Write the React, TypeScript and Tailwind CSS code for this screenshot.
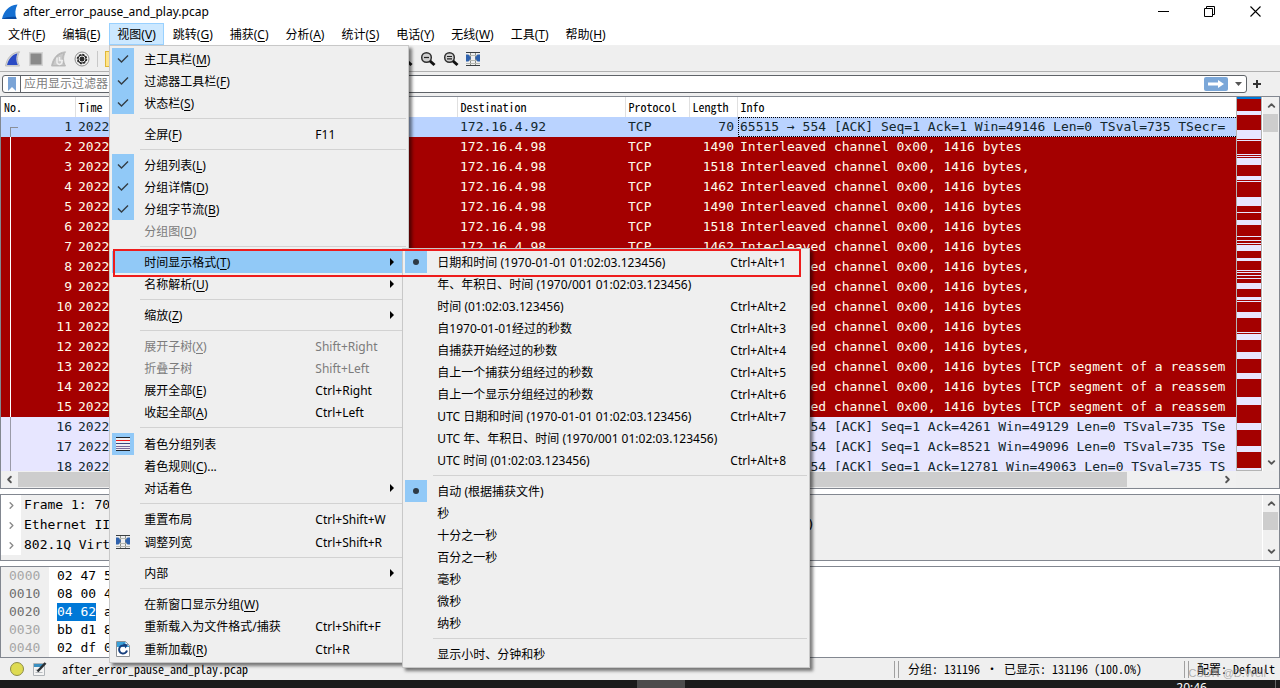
import React, { useState } from "react";
import clsx from "clsx";
import { FiChevronUp, FiChevronDown, FiChevronLeft, FiChevronRight } from "react-icons/fi";

type Entry = {
  label?: string;
  keys?: string;
  sep?: boolean;
  checked?: boolean;
  disabled?: boolean;
  arrow?: boolean;
  open?: boolean;
  icon?: "lines" | "columns" | "reload";
};

const menus = [
  "文件(&F)",
  "编辑(&E)",
  "视图(&V)",
  "跳转(&G)",
  "捕获(&C)",
  "分析(&A)",
  "统计(&S)",
  "电话(&Y)",
  "无线(&W)",
  "工具(&T)",
  "帮助(&H)",
];

const viewMenu: Entry[] = [
  { label: "主工具栏(&M)", checked: true },
  { label: "过滤器工具栏(&F)", checked: true },
  { label: "状态栏(&S)", checked: true },
  { sep: true },
  { label: "全屏(&F)", keys: "F11" },
  { sep: true },
  { label: "分组列表(&L)", checked: true },
  { label: "分组详情(&D)", checked: true },
  { label: "分组字节流(&B)", checked: true },
  { label: "分组图(&D)", disabled: true },
  { sep: true },
  { label: "时间显示格式(&T)", arrow: true, open: true },
  { label: "名称解析(&U)", arrow: true },
  { sep: true },
  { label: "缩放(&Z)", arrow: true },
  { sep: true },
  { label: "展开子树(&X)", keys: "Shift+Right", disabled: true },
  { label: "折叠子树", keys: "Shift+Left", disabled: true },
  { label: "展开全部(&E)", keys: "Ctrl+Right" },
  { label: "收起全部(&A)", keys: "Ctrl+Left" },
  { sep: true },
  { label: "着色分组列表", icon: "lines" },
  { label: "着色规则(&C)..." },
  { label: "对话着色", arrow: true },
  { sep: true },
  { label: "重置布局", keys: "Ctrl+Shift+W" },
  { label: "调整列宽", keys: "Ctrl+Shift+R", icon: "columns" },
  { sep: true },
  { label: "内部", arrow: true },
  { sep: true },
  { label: "在新窗口显示分组(&W)" },
  { label: "重新载入为文件格式/捕获", keys: "Ctrl+Shift+F" },
  { label: "重新加载(&R)", keys: "Ctrl+R", icon: "reload" },
];

const timeMenu: Entry[] = [
  { label: "日期和时间 (1970-01-01 01:02:03.123456)", keys: "Ctrl+Alt+1", checked: true },
  { label: "年、年积日、时间 (1970/001 01:02:03.123456)" },
  { label: "时间 (01:02:03.123456)", keys: "Ctrl+Alt+2" },
  { label: "自1970-01-01经过的秒数", keys: "Ctrl+Alt+3" },
  { label: "自捕获开始经过的秒数", keys: "Ctrl+Alt+4" },
  { label: "自上一个捕获分组经过的秒数", keys: "Ctrl+Alt+5" },
  { label: "自上一个显示分组经过的秒数", keys: "Ctrl+Alt+6" },
  { label: "UTC 日期和时间 (1970-01-01 01:02:03.123456)", keys: "Ctrl+Alt+7" },
  { label: "UTC 年、年积日、时间 (1970/001 01:02:03.123456)" },
  { label: "UTC 时间 (01:02:03.123456)", keys: "Ctrl+Alt+8" },
  { sep: true },
  { label: "自动 (根据捕获文件)", checked: true },
  { label: "秒" },
  { label: "十分之一秒" },
  { label: "百分之一秒" },
  { label: "毫秒" },
  { label: "微秒" },
  { label: "纳秒" },
  { sep: true },
  { label: "显示小时、分钟和秒" },
];

const channel = "Interleaved channel 0x00, 1416 bytes";
const segment = channel + " [TCP segment of a reassem";

const packets = [
  { dst: "172.16.4.92", len: "70", info: "65515 → 554 [ACK] Seq=1 Ack=1 Win=49146 Len=0 TSval=735 TSecr=" },
  { dst: "172.16.4.98", len: "1490", info: channel },
  { dst: "172.16.4.98", len: "1518", info: channel + "," },
  { dst: "172.16.4.98", len: "1462", info: channel },
  { dst: "172.16.4.98", len: "1490", info: channel },
  { dst: "172.16.4.98", len: "1518", info: channel },
  { dst: "172.16.4.98", len: "1462", info: channel },
  { dst: "", len: "", info: channel + "," },
  { dst: "", len: "", info: channel + "," },
  { dst: "", len: "", info: channel },
  { dst: "", len: "", info: channel },
  { dst: "", len: "", info: channel + "," },
  { dst: "", len: "", info: segment },
  { dst: "", len: "", info: segment },
  { dst: "", len: "", info: segment },
  { dst: "", len: "", info: "65515 → 554 [ACK] Seq=1 Ack=4261 Win=49129 Len=0 TSval=735 TSe" },
  { dst: "", len: "", info: "65515 → 554 [ACK] Seq=1 Ack=8521 Win=49096 Len=0 TSval=735 TSe" },
  { dst: "", len: "", info: "65515 → 554 [ACK] Seq=1 Ack=12781 Win=49063 Len=0 TSval=735 TS" },
];

// stripe heights of the scroll map, red first, then lavender, and so on
const stripes = [
  12, 4, 15, 9, 1, 1, 13, 1, 1, 1, 1, 7, 11, 4, 1, 1, 15, 9, 6, 1, 7, 5, 11, 1, 3, 1, 2, 1, 1, 6, 7, 3, 9, 1, 1, 1, 2, 1,
  2, 1, 4, 6, 8, 3, 1, 1, 10, 6, 14, 1, 1, 6, 12, 7, 14, 6, 18, 8, 18, 7, 16, 6, 16, 2,
];

const hexRows = [
  { offset: "0000", bytes: "02 47 5" },
  { offset: "0010", bytes: "08 00 4", related: true },
  { offset: "0020", marked: "04 62", bytes: " a", related: true },
  { offset: "0030", bytes: "bb d1 8" },
  { offset: "0040", bytes: "02 df 0" },
];

const Label = ({ text }: { text: string }) => {
  const at = text.indexOf("&");
  if (at < 0) return <>{text}</>;
  return (
    <>
      {text.slice(0, at)}
      <u className="underline-offset-2">{text[at + 1]}</u>
      {text.slice(at + 2)}
    </>
  );
};

const ColumnsIcon = () => (
  <svg width="14" height="14" viewBox="0 0 14 14">
    <path d="M4.500 1v12M9.500 1v12" stroke="#8a8d88" />
    <path d="M0 3.500h14M0 8.500h14M0 11.500h14" stroke="#b5b8b2" />
    <path d="M0 2.500h2.500L5 6 2.500 9.500H0zM14 2.500h-2.500L9 6l2.500 3.500H14z" fill="#2f62ad" />
    <path d="M0 .5h14M0 13.500h14" stroke="#3a3f42" />
  </svg>
);

const LinesIcon = () => (
  <svg width="14" height="14" viewBox="0 0 14 14">
    <path d="M0 0h14v14H0z" fill="#efeff2" />
    <path d="M0 0h14v1H0zM0 13h14v1H0z" fill="#20252a" />
    <path d="M0 3h14v1H0z" fill="#f01818" />
    <path d="M0 6h14v1H0z" fill="#3a4a80" />
    <path d="M0 9h14v1H0zM0 11h14v1H0z" fill="#7a6a9a" />
  </svg>
);

const ReloadIcon = () => (
  <svg width="14" height="16" viewBox="0 0 14 16">
    <path d="M.5.5h9l4 4v11H.5z" fill="#fff" stroke="#8d9196" />
    <path d="M1 1h8.500L13 4.500V6H1z" fill="#3aa0d8" />
    <path d="M9.500 1v3.500H13z" fill="#fff" />
    <path d="M8.500 4.800A4 4 0 1 0 11 9.500" fill="none" stroke="#173f7d" strokeWidth="2" />
    <path d="M7 2.500l5 1-2.500 4z" fill="#173f7d" />
  </svg>
);

const Fin = ({ grey }: { grey?: boolean }) => (
  <svg width="16" height="16" viewBox="0 0 16 16">
    <path
      d="M.5 15C2 7.500 6 1.500 14.500.8 12 5 11.800 10 14.500 15z"
      fill={grey ? "#b4b4b4" : "#d8d8d8"}
      stroke="#bdbdbd"
    />
    <path d="M2 14C3.500 8 7 3.500 12.500 2.200 10.800 6 11 10 12.800 14z" fill={grey ? "#c9c9c9" : "#2b4bc4"} />
    {grey && <path d="M6 6.500v4a2.500 2.500 0 1 0 4-1.500M8.500 6v3.500h3.500" fill="none" stroke="#efefef" strokeWidth="1.500" />}
  </svg>
);

const Magnifier = ({ d }: { d: string }) => (
  <svg width="16" height="16" viewBox="0 0 16 16">
    <circle cx="6.500" cy="6.500" r="4.800" fill="#cfcfcf" stroke="#2e2e2e" strokeWidth="1.500" />
    <path d="M10 10l4.500 4" stroke="#111" strokeWidth="3" />
    <path d={d} stroke="#222" strokeWidth="1.200" />
  </svg>
);

const icons = { lines: <LinesIcon />, columns: <ColumnsIcon />, reload: <ReloadIcon /> };

const Menu = ({ items, sub }: { items: Entry[]; sub?: boolean }) => (
  <div
    role="menu"
    className={clsx(
      "absolute border border-[#c8c8c8] bg-[#efefef] p-[2px] text-black shadow-[3px_3px_3px_rgba(0,0,0,0.5)]",
      sub ? "-top-[3px] left-[290px] z-20 w-[408px]" : "top-full -left-px z-10 mt-px w-[300px]"
    )}
  >
    {items.map((item, i) =>
      item.sep ? (
        <div key={i} className="flex h-[9px] items-center pl-[28px]">
          <hr className="w-full border-[#d2d2d2]" />
        </div>
      ) : (
        <div key={i} className={clsx("relative", item.open && "bg-[#91c9f7]")}>
          <button
            role="menuitem"
            disabled={item.disabled}
            className={clsx(
              "flex w-full items-center text-left whitespace-nowrap",
              item.icon ? "h-[23px]" : "h-[22px]",
              item.disabled && "text-[#7c7c7c]"
            )}
          >
            <span
              className={clsx(
                "flex h-[22px] w-[22px] shrink-0 items-center justify-center",
                (item.checked || item.icon === "lines") && "bg-[#91c9f7]"
              )}
            >
              {item.checked && sub && <span className="h-[6px] w-[6px] rounded-full bg-[#2d3a45]" />}
              {item.checked && !sub && (
                <svg width="12" height="10" viewBox="0 0 12 10">
                  <path d="M1 4.500l3.500 3.500L11 1.500" fill="none" stroke="#333c44" strokeWidth="1.400" />
                </svg>
              )}
              {item.icon && icons[item.icon]}
            </span>
            <span className={clsx("shrink-0 pt-[2px] pl-[10px]", sub ? "w-[303px]" : "w-[181px]")}>
              <Label text={item.label || ""} />
            </span>
            <span className="grow pt-[2px]">{item.keys}</span>
            {item.arrow && (
              <svg width="4" height="8" viewBox="0 0 4 8" className="mr-3">
                <path d="M0 0l4 4-4 4z" fill="#000" />
              </svg>
            )}
          </button>
          {item.open && (
            <>
              <Menu items={timeMenu} sub />
              <div className="pointer-events-none absolute -top-[2px] left-px z-30 h-[28px] w-[688px] border-2 border-[#ee1c1c]" />
            </>
          )}
        </div>
      )
    )}
  </div>
);

const TitleBar = () => (
  <div className="flex h-[23px] shrink-0 items-center pl-[2px]">
    <svg width="16" height="16" viewBox="0 0 16 16">
      <path d="M0 15C2 7 6 1.500 15.500.5 13 5 12.800 10 14.500 15z" fill="#1670d2" />
      <path d="M0 15c4-2 9-2.500 14-2l.5 2z" fill="#0b4aa0" />
    </svg>
    <h1 className="grow pl-[5px] text-xs">after_error_pause_and_play.pcap</h1>
    <div className="flex items-center gap-[35px] pr-[19px]">
      <button aria-label="最小化">
        <svg width="11" height="11" viewBox="0 0 11 11">
          <path d="M0 5.500h11" stroke="#000" />
        </svg>
      </button>
      <button aria-label="还原">
        <svg width="11" height="11" viewBox="0 0 11 11" fill="none" stroke="#000">
          <path d="M.5 2.500h8v8h-8zM2.500 2.500v-2h8v8h-2" />
        </svg>
      </button>
      <button aria-label="关闭">
        <svg width="11" height="11" viewBox="0 0 11 11">
          <path d="M.5.5l10 10M10.500.5l-10 10" stroke="#000" strokeWidth="1.100" />
        </svg>
      </button>
    </div>
  </div>
);

const Toolbar = () => (
  <div className="flex h-[26px] shrink-0 items-center gap-[7px] border-b border-[#b0b0b0] bg-[#efefef] pl-[5px]">
    <button aria-label="开始捕获">
      <Fin />
    </button>
    <button aria-label="停止捕获">
      <svg width="16" height="16" viewBox="0 0 16 16">
        <path d="M1 1h14v14H1z" fill="#d4d4d4" />
        <path d="M2.500 2.500h11v11h-11z" fill="#8a8a8a" />
      </svg>
    </button>
    <button aria-label="重新捕获">
      <Fin grey />
    </button>
    <button aria-label="捕获选项">
      <svg width="16" height="16" viewBox="0 0 16 16">
        <circle cx="8" cy="8" r="7" fill="#f4f4f4" stroke="#8a8a8a" />
        <circle cx="8" cy="8" r="4.500" fill="#2a2a2a" stroke="#2a2a2a" strokeWidth="1.500" strokeDasharray="2 1.500" />
        <circle cx="8" cy="8" r="3" fill="#2a2a2a" stroke="#e8e8e8" />
      </svg>
    </button>
    <span className="h-4 w-px bg-[#c8c8c8]" />
    <button aria-label="打开" className="h-4 w-4 border border-[#e0b838] bg-[#ffe48a]" />
    <span className="w-[262px]" />
    <button aria-label="放大">
      <Magnifier d="M4 6.500h5M6.500 4v5" />
    </button>
    <button aria-label="缩小">
      <Magnifier d="M4 6.500h5" />
    </button>
    <button aria-label="普通大小">
      <Magnifier d="M4 5.500h5M4 7.800h5" />
    </button>
    <button aria-label="调整列宽">
      <ColumnsIcon />
    </button>
  </div>
);

const FilterBar = () => {
  const [filter, setFilter] = useState("");
  return (
    <div className="flex h-[24px] shrink-0 items-center bg-[#efefef] pr-[19px] pl-[2px]">
      <div className="flex h-[18px] grow items-center rounded-[3px] border border-[#5f6368] bg-white">
        <button aria-label="书签" className="flex h-full w-[18px] items-center justify-center border-r border-[#5f6368]">
          <svg width="8" height="14" viewBox="0 0 8 14">
            <path d="M0 0h8v14l-4-4-4 4z" fill="#7ba4d6" />
          </svg>
        </button>
        <input
          aria-label="应用显示过滤器"
          placeholder="应用显示过滤器"
          value={filter}
          onChange={(e) => setFilter(e.target.value)}
          className="h-4 min-w-0 grow px-[3px] text-xs outline-none placeholder:text-[#808080]"
        />
        <button aria-label="应用" className="flex h-[14px] w-6 items-center justify-center rounded-[2px] bg-[#7ba7d8]">
          <svg width="16" height="8" viewBox="0 0 16 8">
            <path d="M0 2.500h10V0l6 4-6 4V5.500H0z" fill="#fff" />
          </svg>
        </button>
        <button aria-label="历史" className="flex w-[18px] items-center justify-center pl-[3px]">
          <svg width="7" height="4" viewBox="0 0 7 4">
            <path d="M0 0h7L3.500 4z" fill="#555" />
          </svg>
        </button>
      </div>
      <button aria-label="添加" className="ml-[6px]">
        <svg width="8" height="8" viewBox="0 0 8 8">
          <path d="M4 0v8M0 4h8" stroke="#333" strokeWidth="2" />
        </svg>
      </button>
    </div>
  );
};

const VScroll = () => (
  <div className="flex w-[17px] shrink-0 flex-col border-l border-white bg-[#f0f0f0] text-[#555]">
    <button aria-label="向上" className="flex h-[17px] items-center justify-center">
      <FiChevronUp size={11} strokeWidth={4} />
    </button>
    <div className="mr-px h-[18px] bg-[#cdcdcd]" />
    <button aria-label="向下" className="mt-auto flex h-[17px] items-center justify-center">
      <FiChevronDown size={11} strokeWidth={4} />
    </button>
  </div>
);

const th = "border-r border-[#e0e0e0] p-0 pl-[3px] text-left font-normal";

const PacketList = () => (
  <div className="flex min-h-0 grow border border-[#828790] bg-[#efefef]">
    <div className="flex min-w-0 grow flex-col">
      <div className="min-h-0 grow overflow-hidden bg-white">
        <table className="w-full table-fixed border-collapse whitespace-nowrap">
          <colgroup>
            <col className="w-[74px]" />
            <col className="w-[212px]" />
            <col className="w-[170px]" />
            <col className="w-[168px]" />
            <col className="w-[64px]" />
            <col className="w-[48px]" />
            <col />
          </colgroup>
          <thead className="font-['Noto_Sans_CJK_SC',sans-serif] text-xs [font-feature-settings:'hwid']">
            <tr className="h-5">
              <th className={th}>No.</th>
              <th className={th}>Time</th>
              <th className={th}></th>
              <th className={th}>Destination</th>
              <th className={th}>Protocol</th>
              <th className={th}>Length</th>
              <th className="p-0 pl-[3px] text-left font-normal">Info</th>
            </tr>
          </thead>
          <tbody className="font-['DejaVu_Sans_Mono',monospace] text-[13px] leading-5">
            {packets.map((p, i) => (
              <tr
                key={i}
                className={clsx(
                  "h-5",
                  i === 0 && "bg-[#bad3ff] text-[#12272e]",
                  i > 0 && i < 15 && "bg-[#a40000] text-[#fffceb]",
                  i > 14 && "bg-[#e7e6ff] text-[#12272e]"
                )}
              >
                <td className="p-0">
                  <div className="flex h-5 justify-between pr-[3px] pl-[9px]">
                    <span
                      className={clsx(
                        "w-2 border-l",
                        i === 0 && "h-[10px] self-end border-t border-[#8a8f98]",
                        i > 0 && i < 15 && "border-white",
                        i > 14 && "border-[#9a9aa8]"
                      )}
                    />
                    <span>{i + 1}</span>
                  </div>
                </td>
                <td className="p-0 pl-[3px]">2022</td>
                <td className="p-0"></td>
                <td className="p-0 pl-[3px]">{p.dst}</td>
                <td className="p-0 pl-[3px]">{"TCP"}</td>
                <td className="p-0 pr-[3px] text-right">{p.len}</td>
                <td className="overflow-hidden p-0 pl-px">
                  <div className={clsx("h-5 pl-[2px]", i === 0 && "border border-r-0 border-dotted border-black pl-px leading-[18px]")}>
                    {p.info}
                  </div>
                </td>
              </tr>
            ))}
          </tbody>
        </table>
      </div>
      <div className="flex h-[17px] shrink-0 items-center bg-[#f0f0f0] text-[#555]">
        <button aria-label="向左" className="flex w-[17px] justify-center">
          <FiChevronLeft size={11} strokeWidth={4} />
        </button>
        <div className="mr-[92px] h-[15px] grow bg-[#cdcdcd]" />
        <button aria-label="向右" className="flex w-[17px] justify-center">
          <FiChevronRight size={11} strokeWidth={4} />
        </button>
      </div>
    </div>
    <div className="mb-[17px] flex w-[26px] shrink-0 flex-col overflow-hidden border border-t-0 border-[#b4b4b4] bg-[#e7e6ff]">
      <div className="h-[2px] shrink-0 bg-[#0078d7]" />
      {stripes.map((h, i) => (
        <div key={i} className={clsx("shrink-0", i % 2 === 0 ? "bg-[#a40000]" : "bg-[#e7e6ff]")} style={{ height: h }} />
      ))}
    </div>
    <div className="mb-[17px] flex">
      <VScroll />
    </div>
  </div>
);

const Details = () => (
  <div className="mt-[5px] flex shrink-0 border border-[#828790] bg-[#efefef] font-['DejaVu_Sans_Mono',monospace] text-[13px]">
    <ul className="min-w-0 grow overflow-hidden pb-[5px] leading-5 whitespace-nowrap">
      {["Frame 1: 70", "Ethernet II", "802.1Q Virt"].map((line, i) => (
        <li key={line} className="flex">
          <span className="flex w-5 items-center justify-center bg-white text-[#8a8a8a]">
            <FiChevronRight size={11} strokeWidth={3} />
          </span>
          <span className="w-[786px] pl-[3px]">{line}</span>
          {i === 1 && <span>)</span>}
        </li>
      ))}
    </ul>
    <VScroll />
  </div>
);

const HexView = () => (
  <div className="mt-[5px] flex shrink-0 border border-[#828790] bg-white font-['DejaVu_Sans_Mono',monospace] text-[13px] leading-[18px]">
    <div className="w-[48px] bg-[#efefef] pl-2">
      {hexRows.map((row) => (
        <div key={row.offset} className={row.related ? "text-[#6e6e6e]" : "text-[#a6a6a6]"}>
          {row.offset}
        </div>
      ))}
    </div>
    <div className="pl-2 whitespace-pre">
      {hexRows.map((row) => (
        <div key={row.offset}>
          {row.marked && <span className="inline-block bg-[#0078d7] text-white">{row.marked}</span>}
          {row.bytes}
        </div>
      ))}
    </div>
  </div>
);

const Grip = () => <span className="h-[17px] w-[5px] shrink-0 border-x border-[#a0a0a0]" />;

const StatusBar = () => (
  <div className="relative flex h-[22px] shrink-0 items-center bg-[#efefef] pr-1 font-['Noto_Sans_CJK_SC',sans-serif] text-xs whitespace-nowrap [font-feature-settings:'hwid']">
    <button aria-label="专家信息" className="ml-[10px] h-[14px] w-[14px] rounded-full border border-[#8c8c48] bg-[#dedb52]" />
    <button aria-label="编辑注释" className="ml-[9px]">
      <svg width="14" height="14" viewBox="0 0 14 14">
        <path d="M.5 1.500h11v12H.5z" fill="#f4f4f4" stroke="#b0b4b8" />
        <path d="M1 2h9v3H1z" fill="#3a8fc0" />
        <path d="M2.500 8h4M2.500 10.500h7" stroke="#b8bcc0" />
        <path d="M4.500 9.500L12.500 1" stroke="#2a2f33" strokeWidth="2.500" />
      </svg>
    </button>
    <span className="grow pl-[15px]">after_error_pause_and_play.pcap</span>
    <Grip />
    <span className="w-[285px] pl-[9px]">分组: 131196 · 已显示: 131196 (100.0%)</span>
    <Grip />
    <span className="w-[87px] pl-2">配置: Default</span>
    <span className="absolute top-[8px] right-[14px] font-['Liberation_Sans',sans-serif] text-[11px] text-[#8f8f8f]/70 [font-feature-settings:normal]">
      CSDN @D.Well
    </span>
  </div>
);

const App = () => {
  return (
    <div className="flex h-screen flex-col overflow-hidden bg-white font-['Noto_Sans','Noto_Sans_CJK_SC',sans-serif] text-xs text-black">
      <TitleBar />
      <nav className="flex h-[23px] shrink-0 gap-px border-b border-[#f0f0f0]">
        {menus.map((name) => {
          const active = name.includes("视图");
          return (
            <div key={name} className={clsx("relative h-[22px] border", active ? "border-[#99d1ff] bg-[#cce8ff]" : "border-transparent")}>
              <button className="h-5 px-[7px] pt-[2px] whitespace-nowrap">
                <Label text={name} />
              </button>
              {active && <Menu items={viewMenu} />}
            </div>
          );
        })}
      </nav>
      <Toolbar />
      <FilterBar />
      <PacketList />
      <Details />
      <HexView />
      <StatusBar />
      <div className="flex h-2 shrink-0 overflow-hidden bg-[#1b1b1b] text-white">
        <div className="w-1/2" />
        <div className="-ml-[3px] w-12 bg-[#4c4c4c]" />
        <span className="mr-[69px] ml-auto">20:46</span>
        <span className="-ml-px mr-1 w-px bg-[#666]" />
      </div>
    </div>
  );
};

export default App;
